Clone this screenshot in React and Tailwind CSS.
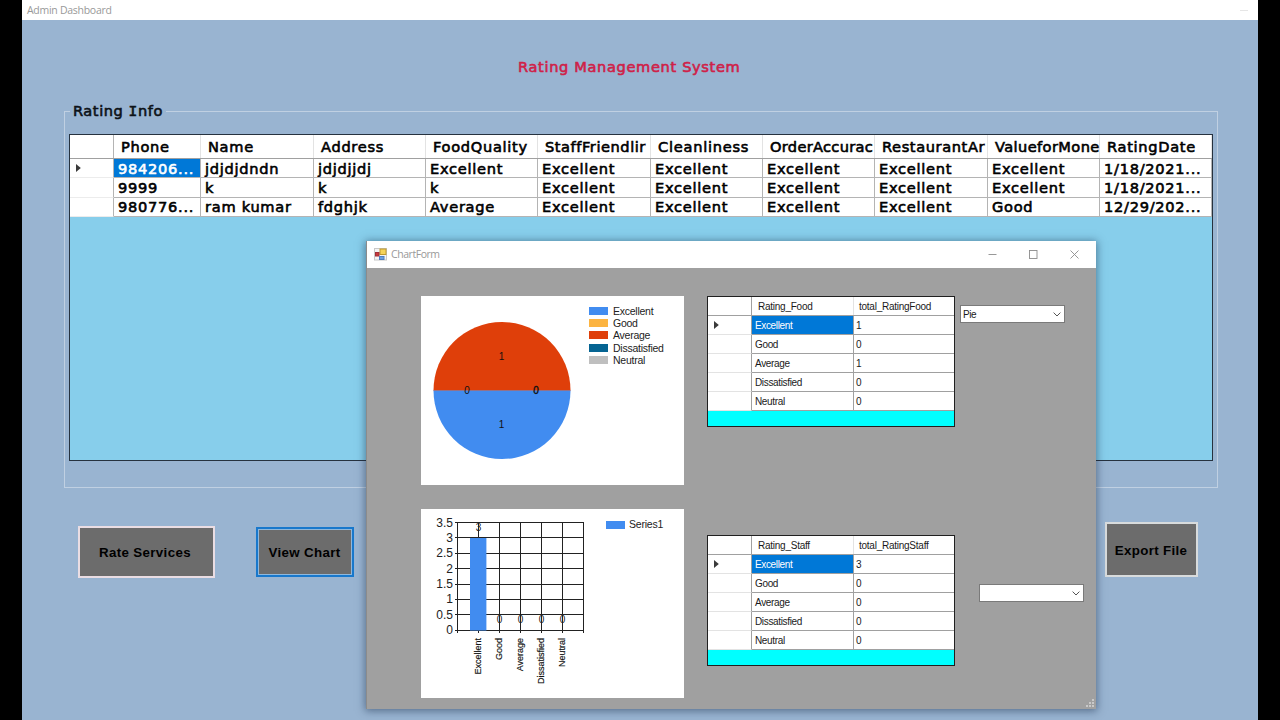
import React from "react";

const VERD = "font-['DejaVu_Sans','Verdana',sans-serif] [-webkit-text-stroke:0.6px_currentColor]";
const SANS = "font-['Liberation_Sans',Arial,sans-serif]";
const SEGOE = "font-['Open_Sans','Noto_Sans',sans-serif]";

const mainCols = [
  { name: "Phone", w: "w-[87px]", t: "tracking-[0.7px]" },
  { name: "Name", w: "w-[113px]", t: "tracking-[0.7px]" },
  { name: "Address", w: "w-[112px]", t: "tracking-[0.7px]" },
  { name: "FoodQuality", w: "w-[112px]", t: "tracking-[0.7px]" },
  { name: "StaffFriendlir", w: "w-[113px]", t: "tracking-[0.55px]" },
  { name: "Cleanliness", w: "w-[112px]", t: "tracking-[0.75px]" },
  { name: "OrderAccurac", w: "w-[112px]", t: "tracking-[0.3px]" },
  { name: "RestaurantAr", w: "w-[113px]", t: "tracking-[0.6px]" },
  { name: "ValueforMone", w: "w-[112px]", t: "tracking-[0.4px]" },
  { name: "RatingDate", w: "w-[112px]", t: "tracking-[0.7px]" },
];

const E = "Excellent";
const mainRows = [
  ["984206...", "jdjdjdndn", "jdjdjjdj", E, E, E, E, E, E, "1/18/2021..."],
  ["9999", "k", "k", "k", E, E, E, E, E, "1/18/2021..."],
  ["980776...", "ram kumar", "fdghjk", "Average", E, E, E, E, "Good", "12/29/202..."],
];
const mainRowHeights = ["h-[19px] leading-[19px]", "h-[20px] leading-[20px]", "h-[19px] leading-[18px]"];

function RowArrow() {
  return (
    <svg width="5" height="8" viewBox="0 0 5 8">
      <path d="M0 0L4.8 4L0 8Z" fill="#3a3a3a" />
    </svg>
  );
}

function MainGrid() {
  return (
    <div className={`flex h-[327px] w-[1144px] flex-col border border-[#26323f] bg-[#87ceeb] text-[14.6px] text-black ${VERD}`}>
      <div className="flex h-[24px] bg-white border-b border-[#a0a0a0]">
        <div className="w-[44px] shrink-0 border-r border-[#b4b4b4]" />
        {mainCols.map((c) => (
          <div key={c.name} className={`${c.w} shrink-0 border-r border-[#e3e3e3] pl-[7px]`}>
            <div className={`whitespace-nowrap leading-[24px] ${c.t}`}>{c.name}</div>
          </div>
        ))}
      </div>
      {mainRows.map((r, i) => (
        <div key={i} className={`flex bg-white ${mainRowHeights[i]}`}>
          <div className="flex w-[44px] shrink-0 items-center border-r border-b border-r-[#b4b4b4] border-b-[#ececec] pl-[6px]">
            {i === 0 && <RowArrow />}
          </div>
          {r.map((v, j) => (
            <div
              key={j}
              className={`${mainCols[j].w} shrink-0 overflow-hidden whitespace-nowrap border-r border-b border-[#b4b4b4] pl-[4px] tracking-[0.72px] ${
                i === 0 && j === 0 ? "bg-[#0078d7] text-white" : ""
              }`}
            >
              {v}
            </div>
          ))}
        </div>
      ))}
    </div>
  );
}

function SmallGrid({ heads, rows }) {
  return (
    <div className={`flex h-[131px] w-[248px] flex-col border border-[#202020] bg-[#00ffff] text-[10px] text-[#1a1a1a] ${SANS}`}>
      <div className="flex h-[18.6px] border-b border-[#a0a0a0] bg-white">
        <div className="w-[44px] border-r border-[#a0a0a0]" />
        <div className="w-[102px] border-r border-[#e3e3e3] pl-[6px] leading-[20px] tracking-[-0.25px]">{heads[0]}</div>
        <div className="flex-1 pl-[5px] leading-[20px] tracking-[-0.25px]">{heads[1]}</div>
      </div>
      {rows.map(([k, v], i) => (
        <div key={k} className="flex h-[19.1px] bg-white">
          <div className="flex w-[44px] items-center border-r border-b border-r-[#a0a0a0] border-b-[#e3e3e3] pl-[6px]">
            {i === 0 && <RowArrow />}
          </div>
          <div
            className={`w-[102px] border-r border-b border-[#a0a0a0] pl-[3px] leading-[19px] tracking-[-0.35px] ${
              i === 0 ? "bg-[#0078d7] text-white" : ""
            }`}
          >
            {k}
          </div>
          <div className="flex-1 border-b border-[#a0a0a0] pl-[2px] leading-[19px]">{v}</div>
        </div>
      ))}
    </div>
  );
}

function Combo({ value }) {
  return (
    <div className={`flex h-[18px] w-[105px] items-center justify-between border border-[#7a7a7a] bg-white pl-[2px] pr-[3px] text-[10px] tracking-[-0.5px] text-[#1a1a1a] ${SANS}`}>
      <span>{value}</span>
      <svg width="8" height="5" viewBox="0 0 8 5">
        <path d="M0.6 0.6L4 4L7.4 0.6" fill="none" stroke="#555" strokeWidth="1" />
      </svg>
    </div>
  );
}

const legend = [
  ["Excellent", "bg-[#418cf0]"],
  ["Good", "bg-[#fcb441]"],
  ["Average", "bg-[#df3f0a]"],
  ["Dissatisfied", "bg-[#056492]"],
  ["Neutral", "bg-[#bfbfbf]"],
];

function PieChart() {
  return (
    <div className="flex h-[189px] w-[263px] bg-white">
      <svg width="168" height="189" viewBox="421 296 168 189" className={SANS}>
        <path d="M433.5 390.5A68.5 68.5 0 0 1 570.5 390.5Z" fill="#df3f0a" />
        <path d="M433.5 390.5A68.5 68.5 0 0 0 570.5 390.5Z" fill="#418cf0" />
        <path d="M433.5 390.5H570.5" stroke="#8f6a80" strokeWidth="0.8" />
        <g fontSize="10" textAnchor="middle" fill="#111">
          <text x="501.5" y="360">1</text>
          <text x="501.5" y="428">1</text>
          <text x="467" y="394">0</text>
          <text x="536" y="394" stroke="#111" strokeWidth="0.4">0</text>
        </g>
      </svg>
      <div className={`flex flex-col pt-[9px] text-[10.5px] tracking-[-0.25px] text-[#222] ${SANS}`}>
        {legend.map(([n, c]) => (
          <div key={n} className="flex h-[12.2px] items-center">
            <span className={`h-[8px] w-[19px] ${c}`} />
            <span className="pl-[5px] leading-[12px]">{n}</span>
          </div>
        ))}
      </div>
    </div>
  );
}

const ticks = ["3.5", "3", "2.5", "2", "1.5", "1", "0.5", "0"];
const cats = ["Excellent", "Good", "Average", "Dissatisfied", "Neutral"];

function BarChart() {
  return (
    <div className="flex h-[189px] w-[263px] bg-white">
      <svg width="185" height="189" viewBox="421 509 185 189" className={SANS}>
        <g stroke="#222" strokeWidth="1">
          {ticks.map((t, i) => (
            <path key={t} d={`M455 ${Math.round(522 + i * 15.4) + 0.5}H584`} />
          ))}
          {[457, 478, 499, 520, 541, 562, 583].map((x) => (
            <path key={x} d={`M${x + 0.5} 522V633`} />
          ))}
        </g>
        <rect x="470" y="538" width="16.4" height="92.5" fill="#418cf0" />
        <g fontSize="12" textAnchor="end" fill="#222">
          {ticks.map((t, i) => (
            <text key={t} x="453" y={526.7 + i * 15.35}>{t}</text>
          ))}
        </g>
        <g fontSize="10" textAnchor="middle" fill="#222">
          <text x="478.5" y="531">3</text>
          {[499.5, 520.5, 541.5, 562.5].map((x) => (
            <text key={x} x={x} y="623">0</text>
          ))}
        </g>
        <g fontSize="9" textAnchor="end" fill="#111" stroke="#111" strokeWidth="0.15">
          {cats.map((c, i) => (
            <text key={c} transform={`translate(${481 + i * 21} 638) rotate(-90)`}>{c}</text>
          ))}
        </g>
      </svg>
      <div className={`flex h-[31px] items-center text-[10.5px] tracking-[-0.2px] text-[#222] ${SANS}`}>
        <span className="h-[8px] w-[19px] bg-[#418cf0]" />
        <span className="pl-[4px]">Series1</span>
      </div>
    </div>
  );
}

function ChartWindow() {
  return (
    <div className="absolute left-[344px] top-[241px] flex h-[468px] w-[730px] flex-col border-l border-[#8b8b8b] bg-[#a0a0a0] shadow-[0_1px_8px_1px_rgba(20,40,70,0.5)]">
      <div className={`flex h-[27px] items-center bg-white pl-[7px] text-[10.5px] tracking-[-0.45px] text-[#999] ${SEGOE}`}>
        <svg width="13" height="13" viewBox="0 0 13 13">
          <rect x="0.5" y="0.5" width="12" height="11.5" fill="#f4f4f4" stroke="#c8c8c8" />
          <rect x="6" y="1" width="6" height="5.5" fill="#f5d35a" stroke="#c09a30" />
          <rect x="1.5" y="4.5" width="3.5" height="3.5" fill="#c9383a" stroke="#a03038" />
          <rect x="5.5" y="8.5" width="4.5" height="3" fill="#6c9fe0" stroke="#4f7fc0" />
        </svg>
        <span className="pl-[4px] leading-[27px]">ChartForm</span>
        <svg className="ml-auto mr-[16px]" width="92" height="9" viewBox="0 0 92 9" fill="none" stroke="#8c8c8c" strokeWidth="0.9">
          <path d="M0.5 4.5H8.5" />
          <rect x="41.5" y="0.5" width="7.5" height="8" />
          <path d="M82.5 0.5L90.5 8.5M90.5 0.5L82.5 8.5" />
        </svg>
      </div>
      <div className="flex flex-1 pl-[54px] pt-[28px]">
        <div className="flex flex-col gap-[24px]">
          <PieChart />
          <BarChart />
        </div>
        <div className="ml-[23px] flex flex-col gap-[108px]">
          <SmallGrid
            heads={["Rating_Food", "total_RatingFood"]}
            rows={[["Excellent", 1], ["Good", 0], ["Average", 1], ["Dissatisfied", 0], ["Neutral", 0]]}
          />
          <SmallGrid
            heads={["Rating_Staff", "total_RatingStaff"]}
            rows={[["Excellent", 3], ["Good", 0], ["Average", 0], ["Dissatisfied", 0], ["Neutral", 0]]}
          />
        </div>
        <div className="ml-[5px] flex flex-col gap-[261px] pt-[9px]">
          <Combo value="Pie" />
          <div className="pl-[19px]">
            <Combo value="" />
          </div>
        </div>
      </div>
      <svg className="absolute bottom-[1px] right-[1px]" width="9" height="9" viewBox="0 0 9 9" fill="#c9c9c9">
        <path d="M6 0h2v2h-2zM3 3h2v2h-2zM6 3h2v2h-2zM0 6h2v2h-2zM3 6h2v2h-2zM6 6h2v2h-2z" />
      </svg>
    </div>
  );
}

export default function App() {
  return (
    <div className="flex h-[720px] w-[1280px] overflow-hidden bg-black px-[22px]">
      <div className="relative flex w-[1236px] flex-col overflow-hidden bg-[#99b4d1]">
        <div className={`flex h-[20px] shrink-0 items-center justify-between bg-white pl-[5px] pr-[10px] pt-px text-[10.5px] tracking-[-0.28px] text-[#999] ${SEGOE}`}>
          <span>Admin Dashboard</span>
          <span className="h-px w-[8px] bg-[#e6e6e6]" />
        </div>
        <h1 className={`mt-[37px] h-[20px] pl-[496px] text-[14.6px] leading-[20px] tracking-[0.65px] text-[#cf2148] ${VERD}`}>
          Rating Management System
        </h1>
        <fieldset className="ml-[42px] mt-[24px] h-[387px] w-[1154px] border border-[#c0d0e2] px-[4px]">
          <legend className={`ml-px h-[20px] px-[3px] text-[14.6px] leading-[20px] tracking-[0.55px] text-[#0d1218] ${VERD}`}>
            Rating <span className="font-['DejaVu_Sans_Mono',monospace]">I</span>nfo
          </legend>
          <div className="mt-[13px]">
            <MainGrid />
          </div>
        </fieldset>
        <div className={`flex items-start pl-[56px] pt-[34px] text-[13.3px] font-bold tracking-[0.35px] text-black ${SANS}`}>
          <button className="mt-[4px] h-[52px] w-[137px] border-2 border-[#eadde3] bg-[#6c6c6c] pr-[3px] pt-[2px]">Rate Services</button>
          <button className="ml-[41px] mt-[5px] h-[50px] w-[98px] border-2 border-[#1878cc] bg-[#6c6c6c] pr-px pt-[2px] shadow-[inset_0_0_0_1px_#8fb8dc]">View Chart</button>
          <button className="ml-[751px] h-[55px] w-[93px] border-2 border-[#d8dbdc] bg-[#6c6c6c] pt-[2px] pr-px">Export File</button>
        </div>
        <ChartWindow />
      </div>
    </div>
  );
}
